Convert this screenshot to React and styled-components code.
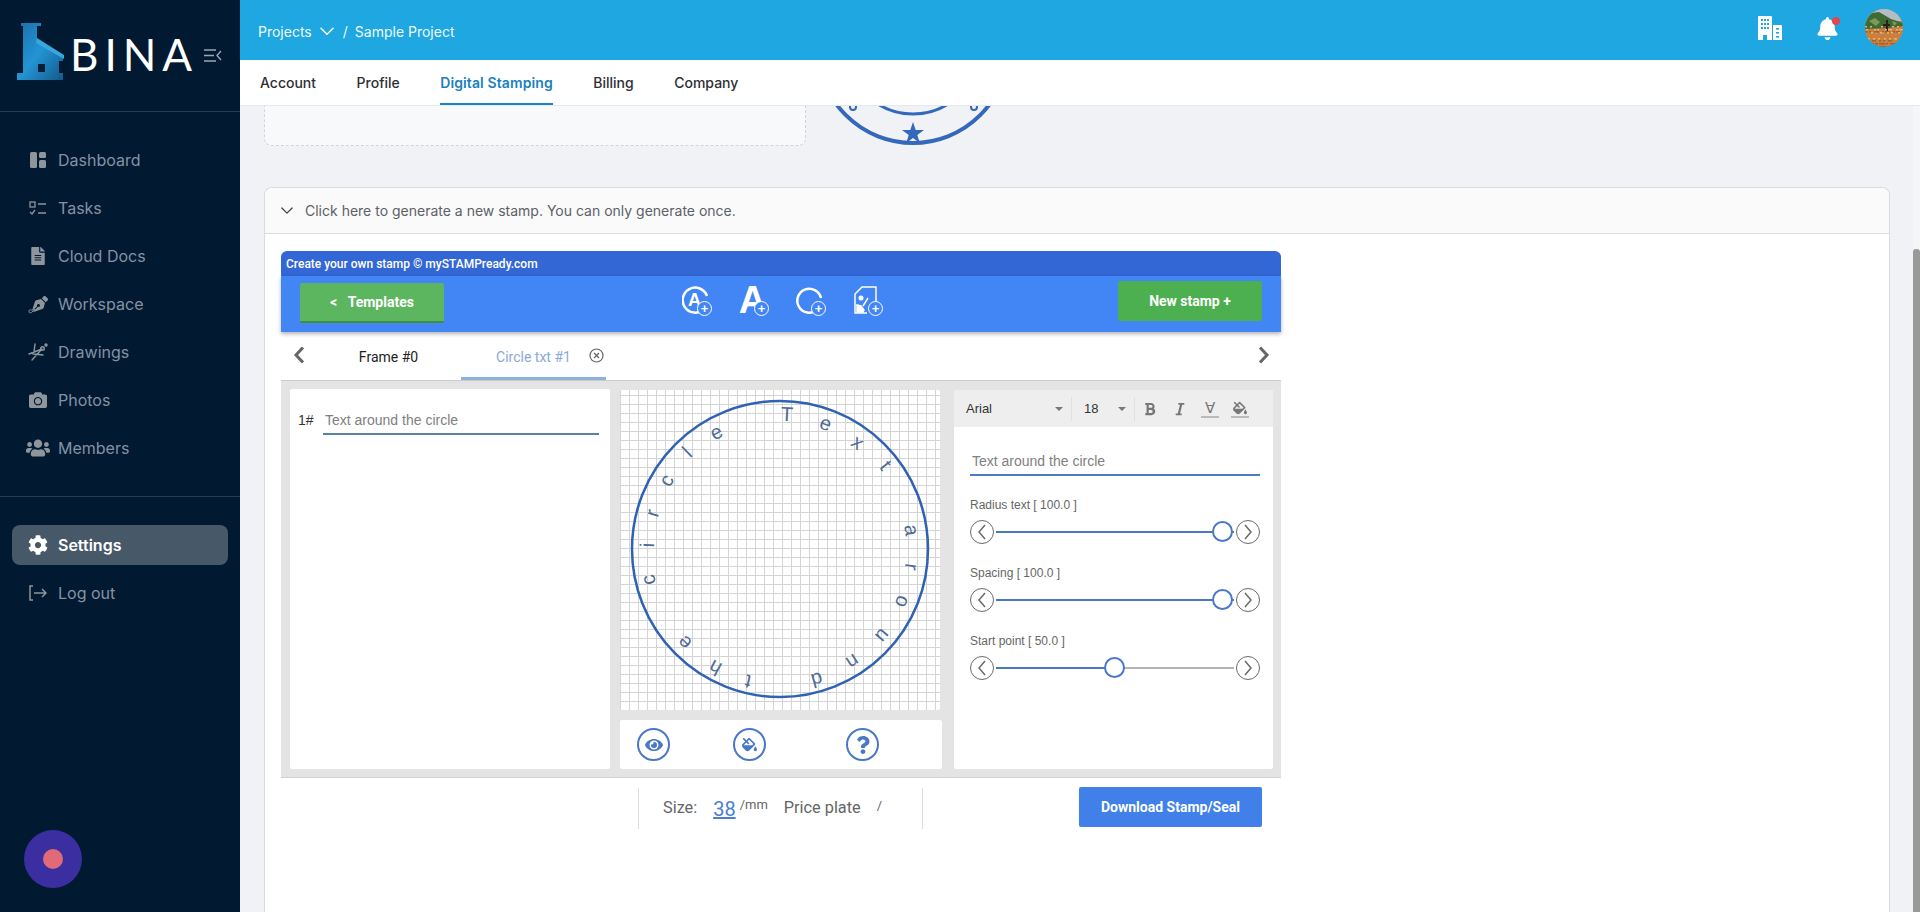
import React, { useLayoutEffect, useRef } from 'react';
import styled, { createGlobalStyle } from 'styled-components';
import { FaBell, FaCamera, FaCog, FaEye, FaFileAlt, FaFillDrip, FaItalic, FaBold, FaPenNib, FaQuestion, FaUsers } from 'react-icons/fa';

const GlobalStyle = createGlobalStyle`
  html, body { margin: 0; padding: 0; height: 100%; overflow: hidden; }
  body { font-family: Inter, "Liberation Sans", sans-serif; background: #f0f2f5; }
  * { box-sizing: border-box; }
`;

const Page = styled.div`
  display: flex;
  width: 100%;
  height: 912px;
  overflow: hidden;
`;

const Sidebar = styled.aside`
  position: relative;
  flex: 0 0 240px;
  background: #011a32;
`;

const LogoRow = styled.div`
  display: flex;
  align-items: center;
  height: 112px;
  padding: 0 16px;
  border-bottom: 1px solid #2a3b4e;
`;

const LogoMark = styled.svg`
  flex: none;
  margin-bottom: 7px;
`;

const LogoText = styled.span`
  margin: 0 0 4px 4px;
  font-family: Lato, Inter, sans-serif;
  font-size: 44px;
  font-weight: 400;
  letter-spacing: 6px;
  line-height: 1;
  color: #fff;
`;

const CollapseIcon = styled.svg`
  margin-left: 6px;
  flex: none;
`;

const Nav = styled.nav`
  display: flex;
  flex-direction: column;
  gap: 8px;
  padding: ${(p) => (p.$first ? '28px 12px' : '28px 12px 0')};
  border-bottom: ${(p) => (p.$first ? '1px solid #2a3b4e' : 'none')};
`;

const NavItem = styled.a`
  display: flex;
  align-items: center;
  gap: 8px;
  height: 40px;
  padding-left: 14px;
  border-radius: 8px;
  font-size: 16px;
  font-weight: ${(p) => (p.$active ? 600 : 400)};
  color: ${(p) => (p.$active ? '#fff' : '#8492a3')};
  background: ${(p) => (p.$active ? '#475869' : 'transparent')};
`;

const NavIcon = styled.span`
  display: flex;
  align-items: center;
  justify-content: center;
  width: 24px;
  font-size: 18px;
  color: ${(p) => (p.$active ? '#fff' : '#8f959c')};
`;

const PenGlyph = styled.span`
  position: relative;
  display: flex;
  width: 20px;
  padding-left: 4px;
  font-size: 16px;

  svg + svg {
    position: absolute;
    left: 0;
    bottom: -2px;
  }
`;

const RecordButton = styled.div`
  position: absolute;
  left: 24px;
  bottom: 24px;
  display: flex;
  align-items: center;
  justify-content: center;
  width: 58px;
  height: 58px;
  border-radius: 50%;
  background: #3a2ea0;

  &::after {
    content: '';
    width: 20px;
    height: 20px;
    border-radius: 50%;
    background: #e06a78;
  }
`;

const Main = styled.main`
  display: flex;
  flex-direction: column;
  flex: 1;
  min-width: 0;
`;

const TopBar = styled.header`
  display: flex;
  align-items: center;
  flex: 0 0 60px;
  padding: 2px 17px 0 18px;
  background: #1ea7e0;
  color: #eef9fe;
  font-size: 14px;
`;

const Crumb = styled.span`
  display: flex;
  align-items: center;
  gap: 8px;
  margin-right: ${(p) => p.$gap || 9}px;
`;

const TopActions = styled.div`
  display: flex;
  align-items: center;
  margin: 0 0 6px auto;
`;

const BellWrap = styled.span`
  position: relative;
  display: flex;
  margin: 0 26px 0 34px;
  font-size: 23px;
  color: #fff;

  &::after {
    content: '';
    position: absolute;
    top: 0;
    right: -1px;
    width: 8px;
    height: 8px;
    border-radius: 50%;
    background: #e2464f;
  }
`;

const Tabs = styled.nav`
  display: flex;
  gap: 40.5px;
  flex: 0 0 45px;
  padding-left: 20px;
  background: #fff;
  border-bottom: 1px solid #e6e8eb;
`;

const Tab = styled.a`
  display: flex;
  align-items: center;
  height: 45px;
  padding-top: 2px;
  font-size: 14px;
  letter-spacing: ${(p) => (p.$active ? '0.1px' : '0')};
  color: ${(p) => (p.$active ? '#1a7fbf' : '#2c2f33')};
  font-weight: ${(p) => (p.$active ? 600 : 500)};
  border-bottom: 2px solid ${(p) => (p.$active ? '#1a85c4' : 'transparent')};
`;

const ScrollArea = styled.div`
  display: flex;
  flex: 1;
  min-height: 0;
`;

const Scroller = styled.div`
  flex: 1;
  min-width: 0;
  padding: 0 23px 0 24px;
  overflow-y: scroll;
  overflow-x: hidden;
  scrollbar-width: none;

  &::-webkit-scrollbar { display: none; }
`;

const ScrollRail = styled.div`
  flex: 0 0 7px;
  padding-top: 143px;
  background: #f5f6f7;

  &::before {
    content: '';
    display: block;
    height: 664px;
    background: #999;
    border-radius: 3px 3px 0 0;
  }
`;

const UploadRow = styled.section`
  display: flex;
  align-items: flex-end;
  gap: 9px;
  height: 214px;
  margin-bottom: 41px;
`;

const DropZone = styled.div`
  width: 542px;
  height: 190px;
  background: #f8f9fa;
  border: 1px dashed #d0d3d7;
  border-radius: 8px;
`;

const StampImage = styled.svg`
  flex: none;
`;

const Card = styled.section`
  height: 726px;
  background: #fff;
  border: 1px solid #d9dcdf;
  border-bottom: none;
  border-radius: 8px 8px 0 0;
`;

const CardHeader = styled.div`
  display: flex;
  align-items: center;
  gap: 12px;
  height: 46px;
  padding-left: 16px;
  background: #fafafa;
  border-bottom: 1px solid #dcdfe2;
  border-radius: 8px 8px 0 0;
  font-size: 14px;
  color: #5c6166;
`;

const CardBody = styled.div`
  padding: 17px 0 0 16px;
`;

const Stamper = styled.div`
  width: 1000px;
  font-family: Roboto, "Liberation Sans", sans-serif;
`;

const TitleBar = styled.div`
  display: flex;
  align-items: center;
  height: 25px;
  padding-left: 5px;
  background: #3367d6;
  border-radius: 6px 6px 0 0;
  color: #fff;
  font-size: 12px;
  font-weight: 500;
`;

const ToolBar = styled.div`
  display: flex;
  align-items: center;
  justify-content: space-between;
  height: 56px;
  padding: 0 19px 3px;
  background: #4285f4;
  box-shadow: 0 2px 4px rgba(0, 0, 0, 0.3);
`;

const GreenButton = styled.button`
  width: 144px;
  height: 40px;
  margin-bottom: ${(p) => (p.$raised ? 0 : 3)}px;
  border: none;
  border-bottom: ${(p) => (p.$raised ? '2px solid #3e8e41' : 'none')};
  border-radius: 2px;
  background: ${(p) => (p.$raised ? '#5cb660' : '#4caf50')};
  color: #fff;
  font-family: inherit;
  font-size: 14px;
  font-weight: 700;
`;

const AddIcons = styled.div`
  display: flex;
  align-items: center;
  gap: 28px;
  margin-bottom: 6px;
`;

const AddIcon = styled.span`
  position: relative;
  display: flex;
  align-items: center;
  justify-content: center;
  width: 29px;
  height: 30px;
  color: #fff;
  font: 700 38px/30px "Liberation Sans", sans-serif;
`;

const PlusBadge = styled.span`
  position: absolute;
  right: -2px;
  bottom: -1px;
  display: flex;
  align-items: center;
  justify-content: center;
  width: 15px;
  height: 15px;
  border: 1.5px solid #fff;
  border-radius: 50%;
  background: #4285f4;

  &::before {
    content: '+';
    color: #fff;
    font: 700 13px/1 "Liberation Sans", sans-serif;
  }
`;

const TabRow = styled.div`
  display: flex;
  align-items: center;
  height: 48px;
  padding: 0 11px 0 12px;
`;

const Arrow = styled.svg`
  flex: none;
  margin: ${(p) => (p.$right ? '0 0 2px auto' : '0 11px 2px 0')};
`;

const StampTab = styled.div`
  position: relative;
  display: flex;
  align-items: center;
  justify-content: center;
  width: 145px;
  height: 48px;
  padding-top: 5px;
  font-size: 14px;
  color: ${(p) => (p.$active ? '#8aa9d8' : '#222')};
  border-bottom: 3px solid ${(p) => (p.$active ? '#8db0dc' : 'transparent')};
`;

const TabClose = styled.svg`
  position: absolute;
  top: 16px;
  right: 2px;
`;

const WorkArea = styled.div`
  display: grid;
  grid-template-columns: 320px 322px 321px;
  column-gap: 10px;
  height: 398px;
  padding: 8px 8px 8px 9px;
  background: #e4e4e4;
  border-top: 1px solid #ccc;
  border-bottom: 1px solid #d2d2d2;
`;

const LinePanel = styled.div`
  display: flex;
  align-items: flex-start;
  padding: 17px 11px 0 8px;
  background: #fff;
  border-radius: 2px;
`;

const RowNumber = styled.span`
  flex: 0 0 25px;
  padding-top: 6px;
  font: 14px "Liberation Sans", sans-serif;
  color: #333;
`;

const TextField = styled.div`
  flex: 1;
  height: 29px;
  padding: 6px 2px 0;
  border-bottom: 2px solid ${(p) => p.$line || '#4a7bc8'};
  font: 14px "Liberation Sans", sans-serif;
  color: #808080;
`;

const CenterColumn = styled.div`
  display: flex;
  flex-direction: column;
  gap: 10px;
`;

const GridCanvas = styled.div`
  width: 320px;
  height: 320px;
  margin-top: 1px;
  border-radius: 2px;
  background-color: #fff;
  background-image:
    linear-gradient(#d4d4d4 1px, transparent 1px),
    linear-gradient(90deg, #d4d4d4 1px, transparent 1px);
  background-size: 9px 9px;
  background-position: 0 5px;
`;

const RoundRow = styled.div`
  display: flex;
  align-items: center;
  flex: 1;
  padding-left: 17px;
  background: #fff;
  border-radius: 2px;
`;

const RoundButton = styled.span`
  display: flex;
  align-items: center;
  justify-content: center;
  width: 33px;
  height: 33px;
  margin-left: ${(p) => p.$gap || 0}px;
  border: 2px solid #4a78c8;
  border-radius: 50%;
  color: #4a78c8;
  font-size: ${(p) => p.$size || 17}px;
`;

const Inspector = styled.div`
  margin: 1px 0 0 2px;
  background: #fff;
  border-radius: 2px;
`;

const FontBar = styled.div`
  display: flex;
  align-items: center;
  height: 37px;
  padding-left: 12px;
  background: #eee;
  font: 13px "Liberation Sans", sans-serif;
  color: #333;
`;

const FontSelect = styled.span`
  display: flex;
  align-items: center;
  justify-content: space-between;
  width: ${(p) => p.$width}px;
  height: 24px;
  padding-right: ${(p) => p.$pad}px;
  margin-right: ${(p) => p.$gap}px;
  border-right: 1px solid #e0e0e0;

  &::after {
    content: '';
    border: 4px solid transparent;
    border-top: 4px solid #777;
    border-bottom: none;
  }
`;

const StyleIcon = styled.span`
  display: flex;
  align-items: center;
  justify-content: center;
  width: 18px;
  height: 19px;
  margin-right: ${(p) => p.$gap || 0}px;
  font-size: ${(p) => p.$size || 14}px;
  color: #777;
  border-bottom: ${(p) => (p.$under ? '2px solid #bbb' : 'none')};
`;

const InspectorBody = styled.div`
  padding: 20px 13px 0 16px;
`;

const SliderBlock = styled.div`
  margin-top: ${(p) => (p.$first ? 22 : 20)}px;
`;

const SliderLabel = styled.div`
  height: 14px;
  font: 12px/14px "Liberation Sans", sans-serif;
  color: #666;
`;

const SliderRow = styled.div`
  display: flex;
  align-items: center;
  gap: 2px;
  height: 28px;
  margin-top: 6px;
`;

const StepButton = styled.span`
  display: flex;
  align-items: center;
  justify-content: center;
  flex: none;
  width: 24px;
  height: 24px;
  border: 1.8px solid #6a6a6a;
  border-radius: 50%;
`;

const Track = styled.div`
  position: relative;
  flex: 1;
  height: 2px;
  background: linear-gradient(
    90deg,
    #4a78c8 ${(p) => p.$value}%,
    #b5b5b5 ${(p) => p.$value}%
  );
`;

const Thumb = styled.span`
  position: absolute;
  top: -10px;
  left: ${(p) => (p.$value / 100) * 216 - 0.5}px;
  width: 21px;
  height: 21px;
  border: 2px solid #4a78c8;
  border-radius: 50%;
  background: #fff;
`;

const Footer = styled.div`
  display: flex;
  align-items: center;
  padding-top: 9px;
`;

const SizeBox = styled.div`
  display: flex;
  align-items: center;
  width: 285px;
  height: 41px;
  margin-left: 357px;
  padding: 0 0 2px 24px;
  border-left: 1px solid #ddd;
  border-right: 1px solid #ddd;
  font-size: 16.3px;
  color: #666;
`;

const SizeValue = styled.u`
  margin: 3px 4px 0 16px;
  font-size: 20px;
  color: #4a7fd0;
`;

const SizeUnit = styled.span`
  margin: -5px 16px 0 0;
  font-size: 13px;
`;

const PlateSlash = styled.span`
  margin: -4px 0 0 16px;
  font-size: 13px;
`;

const DownloadButton = styled.button`
  width: 183px;
  height: 40px;
  margin: 0 19px 2px auto;
  border: none;
  border-radius: 2px;
  background: #4080e8;
  color: #fff;
  font-family: inherit;
  font-size: 14px;
  font-weight: 700;
`;

const circleLetters = [
  ['T', 7, -135], ['e', 46, -126], ['x', 78, -107], ['t', 106, -84],
  ['a', 132, -19], ['r', 132, 18], ['o', 123, 53], ['u', 103, 87],
  ['n', 73, 113], ['d', 37, 131], ['t', -32, 133], ['h', -65, 119],
  ['e', -96, 94], ['c', -132, 31], ['i', -133, -4], ['r', -128, -36],
  ['c', -114, -69], ['l', -93, -97], ['e', -64, -117],
];

const Stamp = () => (
  <StampImage width="196" height="196" viewBox="0 0 196 196">
    <circle cx="98" cy="98" r="95" fill="none" stroke="#3368ba" strokeWidth="4" />
    <circle cx="98" cy="98" r="66" fill="none" stroke="#3368ba" strokeWidth="3" />
    <circle cx="38" cy="157" r="3" fill="none" stroke="#3368ba" strokeWidth="2" />
    <circle cx="159" cy="157" r="3" fill="none" stroke="#3368ba" strokeWidth="2" />
    <polygon points="98,172 100.7,180 109,180 102.3,185 104.8,193 98,188 91.2,193 93.7,185 87,180 95.3,180" fill="#3368ba" />
  </StampImage>
);

const Logo = () => (
  <LogoMark width="50" height="58" viewBox="0 0 50 58">
    <defs>
      <linearGradient id="logoBlue" x1="0" y1="0" x2="1" y2="1">
        <stop offset="0" stopColor="#1c6fa8" />
        <stop offset="0.5" stopColor="#2394d4" />
        <stop offset="1" stopColor="#135a8a" />
      </linearGradient>
    </defs>
    <path d="M5 0H25V3H21V17L47 33V38H43V50H47V57H1V50H7V3H5Z" fill="url(#logoBlue)" />
    <path d="M21 15L48 32V36L20 20Z" fill="#3aa6df" />
    <rect x="22" y="41" width="7" height="8" fill="#052038" />
  </LogoMark>
);

const Buildings = () => (
  <svg width="24" height="24" viewBox="0 0 24 24" fill="#fff">
    <path d="M0 1a1 1 0 0 1 1-1h12a1 1 0 0 1 1 1v23H9v-5H5v5H0Z" />
    <path d="M15 9h8a1 1 0 0 1 1 1v14h-9Z" />
    <g fill="#1ea7e0">
      <rect x="3" y="3" width="2" height="2" /><rect x="6" y="3" width="2" height="2" /><rect x="9" y="3" width="2" height="2" />
      <rect x="3" y="7" width="2" height="2" /><rect x="6" y="7" width="2" height="2" /><rect x="9" y="7" width="2" height="2" />
      <rect x="3" y="11" width="2" height="2" /><rect x="6" y="11" width="2" height="2" /><rect x="9" y="11" width="2" height="2" />
      <rect x="18" y="12" width="3" height="1.6" /><rect x="18" y="16" width="3" height="1.6" /><rect x="18" y="20" width="3" height="1.6" />
    </g>
  </svg>
);

const Avatar = () => {
  const dots = [];
  for (let i = 0; i < 90; i++) {
    const x = (i * 23) % 38;
    const y = 17 + ((i * i * 5) % 21);
    dots.push(<rect key={i} x={x} y={y} width="2" height="1.5" fill={i % 3 ? '#a5602f' : '#e5b27a'} />);
  }
  return (
    <svg width="38" height="38" viewBox="0 0 38 38">
      <defs>
        <clipPath id="avatarClip"><circle cx="19" cy="19" r="19" /></clipPath>
      </defs>
      <g clipPath="url(#avatarClip)">
        <rect width="38" height="38" fill="#c9803f" />
        <rect width="38" height="12" fill="#b4bcc4" />
        <path d="M0 5L14 3L26 10L38 14V17L24 19L0 20Z" fill="#3f6a33" />
        <path d="M4 12l6-3 5 4-4 4ZM27 12l5 2-3 3Z" fill="#7d9a55" />
        <rect x="21" y="11" width="2" height="11" fill="#2c2118" />
        <rect x="18" y="15" width="7" height="2" fill="#2c2118" />
        {dots}
      </g>
    </svg>
  );
};

const Caret = ({ size = 14, color = '#fff', width = 1.5 }) => (
  <svg width={size} height={size * 0.6} viewBox="0 0 14 8" fill="none" stroke={color} strokeWidth={width} strokeLinecap="round" strokeLinejoin="round">
    <path d="M1 1l6 6 6-6" />
  </svg>
);

const StepArrow = ({ left }) => (
  <svg width="10" height="16" viewBox="0 0 10 16" fill="none" stroke="#6a6a6a" strokeWidth="1.5">
    <path d={left ? 'M8 1L2 8l6 7' : 'M2 1l6 7-6 7'} />
  </svg>
);

const DashIcon = () => (
  <svg width="16" height="16" viewBox="0 0 16 16" fill="currentColor">
    <rect width="7" height="16" rx="1.5" />
    <rect x="9" width="7" height="6" rx="1.5" />
    <rect x="9" y="8" width="7" height="8" rx="1.5" />
  </svg>
);

const TaskIcon = () => (
  <svg width="18" height="15" viewBox="0 0 18 15" fill="none" stroke="currentColor" strokeWidth="1.3">
    <rect x="1" y="1" width="5" height="5" />
    <path d="M9 3h8M9 12h8M1 11l2 2 3-4" />
  </svg>
);

const WorkIcon = () => (
  <PenGlyph>
    <FaPenNib />
    <svg width="8" height="8" viewBox="0 0 8 8" fill="none" stroke="currentColor" strokeWidth="1">
      <path d="M7 3C4 7 1 8 1 5.500s2-2 3-1" />
    </svg>
  </PenGlyph>
);

const DrawIcon = () => (
  <svg width="20" height="18" viewBox="0 0 20 18" fill="none" stroke="currentColor" strokeWidth="1.4" strokeLinecap="round">
    <path d="M1 11L14 6M4 17L13 7M7 1L6 9M5 11L15 12" />
    <circle cx="14.5" cy="5.5" r="1.8" />
    <circle cx="18" cy="2" r="1" fill="currentColor" />
  </svg>
);

const LogoutIcon = () => (
  <svg width="18" height="16" viewBox="0 0 18 16" fill="none" stroke="currentColor" strokeWidth="1.5">
    <path d="M4 1H1v14h3M5 8h12M13 4l4 4-4 4" />
  </svg>
);

const mainNav = [
  ['Dashboard', <DashIcon />],
  ['Tasks', <TaskIcon />],
  ['Cloud Docs', <FaFileAlt size={18} />],
  ['Workspace', <WorkIcon />],
  ['Drawings', <DrawIcon />],
  ['Photos', <FaCamera size={18} />],
  ['Members', <FaUsers size={24} />],
];

const sliders = [
  { label: 'Radius text [ 100.0 ]', value: 100 },
  { label: 'Spacing [ 100.0 ]', value: 100 },
  { label: 'Start point [ 50.0 ]', value: 50 },
];

export default function App() {
  const scrollerRef = useRef(null);

  useLayoutEffect(() => {
    scrollerRef.current.scrollTop = 174;
  }, []);

  return (
    <>
      <GlobalStyle />
      <Page>
        <Sidebar>
          <LogoRow>
            <Logo />
            <LogoText>BINA</LogoText>
            <CollapseIcon width="18" height="13" viewBox="0 0 18 13" fill="none" stroke="#9aa6b2" strokeWidth="1.4">
              <path d="M0 1h12M0 6.5h10M0 12h12M17 2l-4 4.5 4 4.5" />
            </CollapseIcon>
          </LogoRow>
          <Nav $first>
            {mainNav.map(([label, icon]) => (
              <NavItem key={label}>
                <NavIcon>{icon}</NavIcon>
                {label}
              </NavItem>
            ))}
          </Nav>
          <Nav>
            <NavItem $active>
              <NavIcon $active><FaCog size={20} /></NavIcon>
              Settings
            </NavItem>
            <NavItem>
              <NavIcon><LogoutIcon /></NavIcon>
              Log out
            </NavItem>
          </Nav>
          <RecordButton />
        </Sidebar>

        <Main>
          <TopBar>
            <Crumb>Projects <Caret /></Crumb>
            <Crumb $gap={7}>/</Crumb>
            <Crumb>Sample Project</Crumb>
            <TopActions>
              <Buildings />
              <BellWrap><FaBell /></BellWrap>
              <Avatar />
            </TopActions>
          </TopBar>

          <Tabs>
            <Tab>Account</Tab>
            <Tab>Profile</Tab>
            <Tab $active>Digital Stamping</Tab>
            <Tab>Billing</Tab>
            <Tab>Company</Tab>
          </Tabs>

          <ScrollArea>
            <Scroller ref={scrollerRef}>
              <UploadRow>
                <DropZone />
                <Stamp />
              </UploadRow>

              <Card>
                <CardHeader>
                  <Caret size={12} color="#444" />
                  Click here to generate a new stamp. You can only generate once.
                </CardHeader>
                <CardBody>
                  <Stamper>
                    <TitleBar>Create your own stamp © mySTAMPready.com</TitleBar>
                    <ToolBar>
                      <GreenButton $raised>&lt;&nbsp;&nbsp;&nbsp;Templates</GreenButton>
                      <AddIcons>
                        <AddIcon>
                          <svg width="27" height="28" viewBox="0 0 27 28" fill="none" stroke="#fff" strokeWidth="2.5">
                            <path d="M22 23A12.5 12.5 0 1 1 25 10" />
                            <text x="6" y="20" fontSize="18" fontWeight="700" fill="#fff" stroke="none" fontFamily="Liberation Sans">A</text>
                          </svg>
                          <PlusBadge />
                        </AddIcon>
                        <AddIcon>A<PlusBadge /></AddIcon>
                        <AddIcon>
                          <svg width="27" height="28" viewBox="0 0 27 28" fill="none" stroke="#fff" strokeWidth="2.5">
                            <path d="M21 24A12 12 0 1 1 25 12" />
                          </svg>
                          <PlusBadge />
                        </AddIcon>
                        <AddIcon>
                          <svg width="25" height="28" viewBox="0 0 25 28" fill="none" stroke="#fff" strokeWidth="1.5">
                            <path d="M22 16V1H8L1 8V27H13" />
                            <circle cx="7" cy="12" r="2.5" fill="#fff" stroke="none" />
                            <path d="M3 26V19l4 1 3 4-1 2Z" fill="#fff" />
                            <path d="M9 20L14 12" />
                          </svg>
                          <PlusBadge />
                        </AddIcon>
                      </AddIcons>
                      <GreenButton>New stamp +</GreenButton>
                    </ToolBar>

                    <TabRow>
                      <Arrow width="12" height="18" viewBox="0 0 12 18" fill="none" stroke="#666" strokeWidth="3">
                        <path d="M10 1.5L3 9l7 7.5" />
                      </Arrow>
                      <StampTab>Frame #0</StampTab>
                      <StampTab $active>
                        Circle txt #1
                        <TabClose width="15" height="15" viewBox="0 0 15 15" fill="none" stroke="#666" strokeWidth="1.2">
                          <circle cx="7.5" cy="7.5" r="6.5" />
                          <path d="M5 5l5 5M10 5l-5 5" />
                        </TabClose>
                      </StampTab>
                      <Arrow $right width="12" height="18" viewBox="0 0 12 18" fill="none" stroke="#666" strokeWidth="3">
                        <path d="M2 1.5L9 9l-7 7.5" />
                      </Arrow>
                    </TabRow>

                    <WorkArea>
                      <LinePanel>
                        <RowNumber>1#</RowNumber>
                        <TextField $line="#5b82a5">Text around the circle</TextField>
                      </LinePanel>

                      <CenterColumn>
                        <GridCanvas>
                          <svg width="320" height="320" viewBox="0 0 320 320">
                            <circle cx="160" cy="159" r="148" fill="none" stroke="#2f62b3" strokeWidth="2.5" />
                            {circleLetters.map(([ch, dx, dy], i) => (
                              <text
                                key={i}
                                x={160 + dx}
                                y={159 + dy}
                                fontSize="20"
                                fontFamily="Liberation Sans"
                                fill="#4e6a96"
                                textAnchor="middle"
                                dominantBaseline="central"
                                transform={`rotate(${(Math.atan2(dx, -dy) * 180) / Math.PI} ${160 + dx} ${159 + dy})`}
                              >
                                {ch}
                              </text>
                            ))}
                          </svg>
                        </GridCanvas>
                        <RoundRow>
                          <RoundButton $size={18}><FaEye /></RoundButton>
                          <RoundButton $gap={63} $size={15}><FaFillDrip /></RoundButton>
                          <RoundButton $gap={80} $size={18}><FaQuestion /></RoundButton>
                        </RoundRow>
                      </CenterColumn>

                      <Inspector>
                        <FontBar>
                          <FontSelect $width={106} $pad={8} $gap={12}>Arial</FontSelect>
                          <FontSelect $width={51} $pad={8} $gap={6}>18</FontSelect>
                          <StyleIcon $gap={12}><FaBold /></StyleIcon>
                          <StyleIcon $gap={12}><FaItalic /></StyleIcon>
                          <StyleIcon $gap={12} $under $size={15}>∀</StyleIcon>
                          <StyleIcon $under><FaFillDrip /></StyleIcon>
                        </FontBar>
                        <InspectorBody>
                          <TextField>Text around the circle</TextField>
                          {sliders.map((s, i) => (
                            <SliderBlock key={s.label} $first={i === 0}>
                              <SliderLabel>{s.label}</SliderLabel>
                              <SliderRow>
                                <StepButton><StepArrow left /></StepButton>
                                <Track $value={s.value}>
                                  <Thumb $value={s.value} />
                                </Track>
                                <StepButton><StepArrow /></StepButton>
                              </SliderRow>
                            </SliderBlock>
                          ))}
                        </InspectorBody>
                      </Inspector>
                    </WorkArea>

                    <Footer>
                      <SizeBox>
                        Size:
                        <SizeValue>38</SizeValue>
                        <SizeUnit>/mm</SizeUnit>
                        Price plate
                        <PlateSlash>/</PlateSlash>
                      </SizeBox>
                      <DownloadButton>Download Stamp/Seal</DownloadButton>
                    </Footer>
                  </Stamper>
                </CardBody>
              </Card>
            </Scroller>
            <ScrollRail />
          </ScrollArea>
        </Main>
      </Page>
    </>
  );
}
